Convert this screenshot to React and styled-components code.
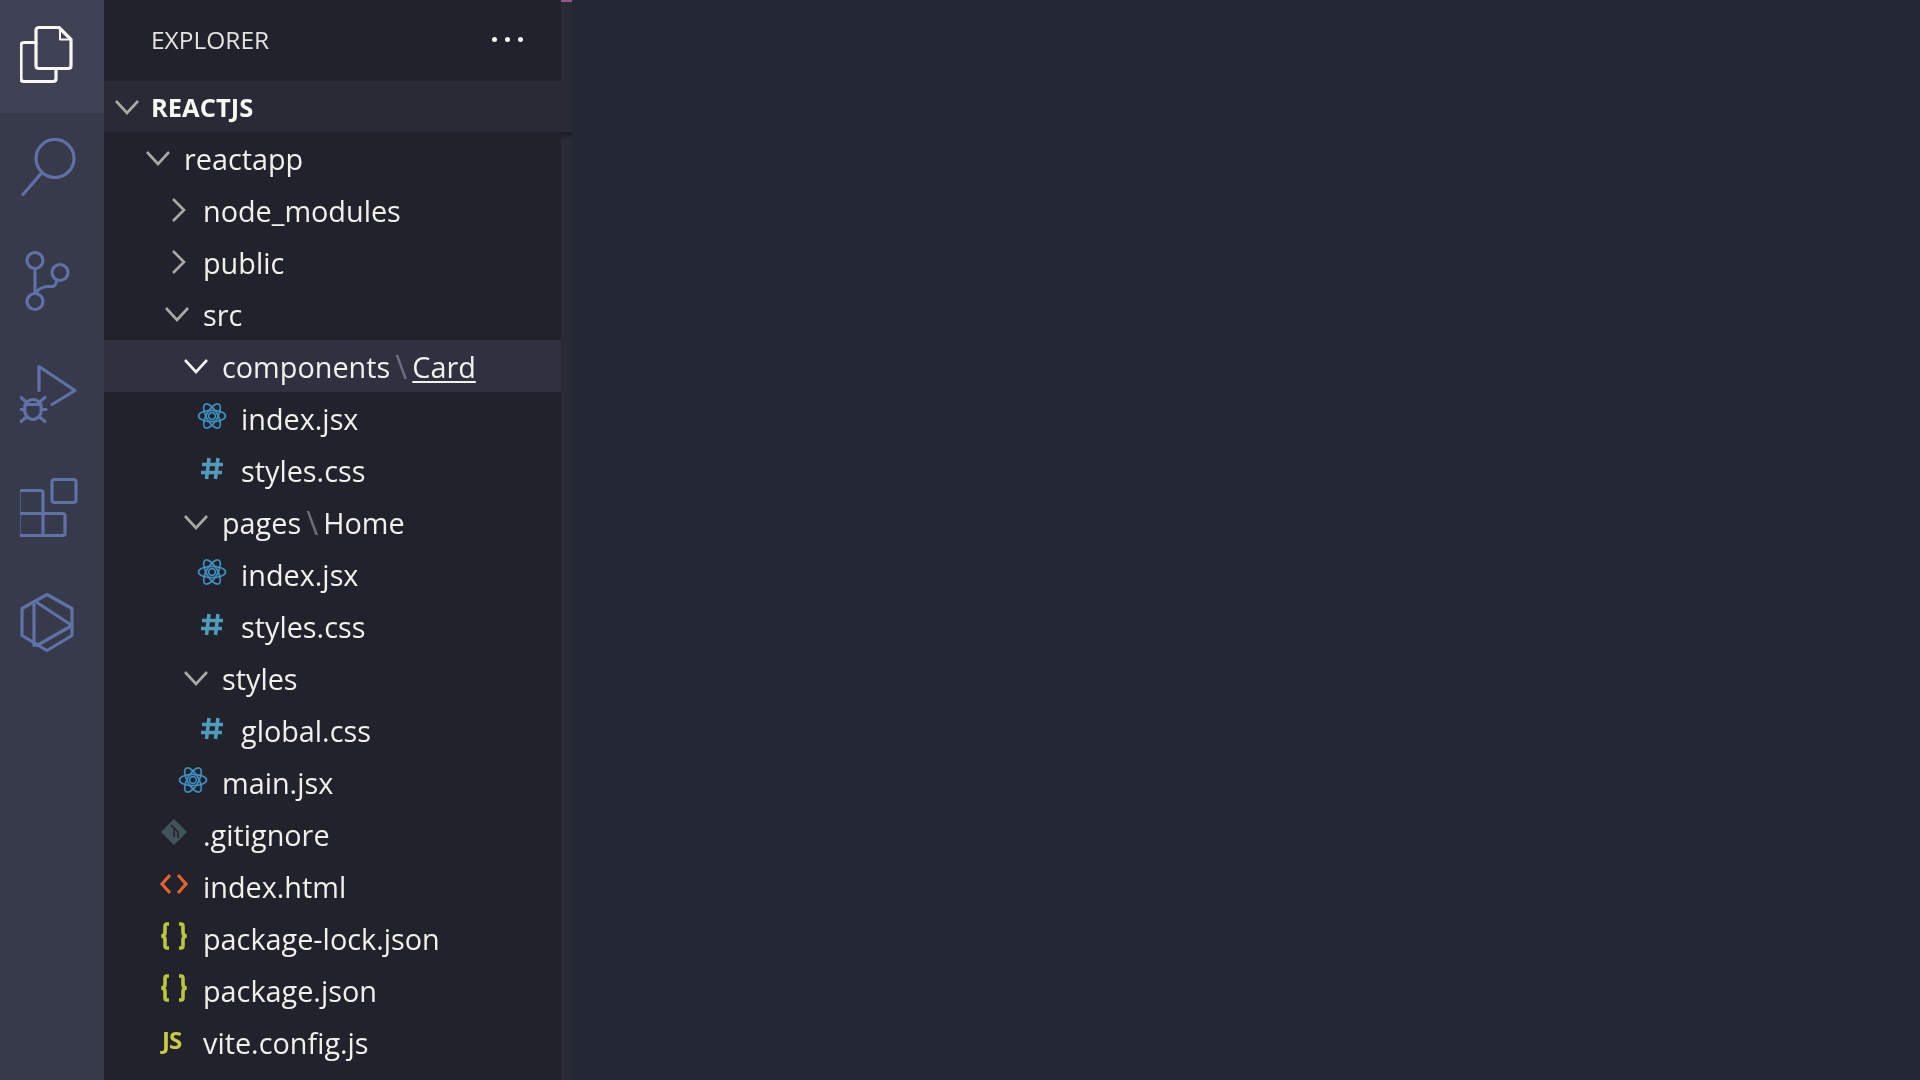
import React from 'react'
import styled, { createGlobalStyle } from 'styled-components'

const GlobalStyle = createGlobalStyle`
    html, body {
        margin: 0;
        height: 100%;
        background: #242834;
    }
    body {
        font-family: 'Open Sans', 'Noto Sans', sans-serif;
        overflow: hidden;
    }
`

const Workbench = styled.div`
    display: flex;
    width: 1920px;
    height: 1080px;
    overflow: hidden;
    background: #242834;
    filter: blur(0.4px);
`

const ActivityBar = styled.nav`
    flex: 0 0 104px;
    display: flex;
    flex-direction: column;
    background: #363a4a;
`

const ActivityItem = styled.div`
    flex: 0 0 113px;
    display: flex;
    align-items: center;
    justify-content: center;
    background: ${(p) => (p.$active ? '#3f4155' : 'transparent')};
`

const ActivityIcon = styled.svg`
    width: 64px;
    height: 64px;
    fill: none;
    stroke: ${(p) => (p.$active ? '#f8f8f2' : '#6071a8')};
    stroke-width: 3.2;
    stroke-linecap: round;
    stroke-linejoin: round;
`

const SideBar = styled.aside`
    position: relative;
    flex: 0 0 468px;
    display: flex;
    flex-direction: column;
    background: #282a36;
`

const TitleBar = styled.header`
    flex: 0 0 81px;
    display: flex;
    align-items: center;
    justify-content: space-between;
    box-sizing: border-box;
    margin-right: 11px;
    padding: 0 38px 2px 47px;
    background: #21222c;
`

const Title = styled.h2`
    margin: 0;
    font-size: 24.5px;
    font-weight: 400;
    color: #e4e4df;
`

const MoreDots = styled.div`
    display: flex;
    gap: 8px;
`

const Dot = styled.span`
    width: 5px;
    height: 5px;
    border-radius: 50%;
    background: #f8f8f2;
`

const SectionHeader = styled.div`
    flex: 0 0 51px;
    display: flex;
    align-items: center;
    padding-left: 11px;
    font-size: 25.5px;
    font-weight: 700;
    color: #f8f8f2;
`

const SectionLabel = styled.span`
    margin-left: -2px;
`

const Tree = styled.div`
    flex: 1;
    margin-right: 11px;
    background: #21222c;
`

const Row = styled.div`
    display: flex;
    align-items: center;
    height: 52px;
    padding-left: ${(p) => 23 + p.$level * 19}px;
    font-size: 28.8px;
    color: #f1f1ec;
    white-space: nowrap;
    background: ${(p) => (p.$selected ? '#2f3140' : 'transparent')};
`

const IconSlot = styled.span`
    flex: 0 0 38px;
    display: flex;
    align-items: center;
    height: 100%;
`

const Chevron = styled.svg`
    width: 24px;
    height: 24px;
    fill: none;
    stroke: ${(p) => (p.$bright ? '#f1f1ec' : '#a9a9a6')};
    stroke-width: 2.6;
`

const FileIcon = styled.svg`
    width: 30px;
    height: 30px;
    margin-left: -6px;
    margin-top: -4px;
    fill: none;
`

const JsBadge = styled.span`
    margin-left: -3px;
    margin-top: -5px;
    font-size: 24px;
    font-weight: 700;
    letter-spacing: -1px;
    color: #cbcb41;
`

const Separator = styled.span`
    margin: 0 5px;
    font-size: 33px;
    line-height: 1;
    color: #6b6d78;
`

const Underlined = styled.span`
    text-decoration: underline;
    text-underline-offset: 3px;
    text-decoration-thickness: 2px;
`

const GutterShadow = styled.div`
    position: absolute;
    top: 132px;
    right: 0;
    width: 11px;
    height: 8px;
    background: linear-gradient(#1b1c24, #282a36);
`

const ActiveMark = styled.div`
    position: absolute;
    top: 0;
    right: 0;
    width: 11px;
    height: 2px;
    background: #a0528c;
`

const ChevronIcon = ({ open, bright }) => (
    <Chevron viewBox="0 0 24 24" $bright={bright}>
        {open ? <path d="M1 6l11 12L23 6" /> : <path d="M8 1l11 11L8 23" />}
    </Chevron>
)

const ReactIcon = () => (
    <FileIcon viewBox="0 0 30 30" stroke="#3f8fbf" strokeWidth="1.7">
        <ellipse cx="15" cy="15" rx="13.5" ry="5.6" />
        <ellipse cx="15" cy="15" rx="13.5" ry="5.6" transform="rotate(60 15 15)" />
        <ellipse cx="15" cy="15" rx="13.5" ry="5.6" transform="rotate(120 15 15)" />
        <circle cx="15" cy="15" r="3.4" />
    </FileIcon>
)

const HashIcon = () => (
    <FileIcon viewBox="0 0 30 30" stroke="#519aba" strokeWidth="3.6">
        <path d="M12 5L9.500 26M21 5l-2.500 21M5 11.500h21M4 19.500h21" />
    </FileIcon>
)

const GitIcon = () => (
    <FileIcon viewBox="0 0 30 30">
        <path d="M15 2l13 13-13 13L2 15z" fill="#41535b" />
        <path d="M12 8l7 7v6M15 12v8" stroke="#21222c" strokeWidth="1.6" />
    </FileIcon>
)

const HtmlIcon = () => (
    <FileIcon viewBox="0 0 30 30" stroke="#e0622c" strokeWidth="3.2">
        <path d="M11 6l-8 9 8 9M19 6l8 9-8 9" />
    </FileIcon>
)

const JsonIcon = () => (
    <FileIcon viewBox="0 0 30 30" stroke="#bcc63c" strokeWidth="3.6">
        <path d="M10 3H8Q6 3 6 5.500v6Q6 14.500 2.500 15Q6 15.500 6 18.500v6Q6 27 8 27h2" />
        <path d="M20 3h2Q24 3 24 5.500v6q0 3 3.500 3.500Q24 15.500 24 18.500v6Q24 27 22 27h-2" />
    </FileIcon>
)

const fileIcons = {
    react: <ReactIcon />,
    css: <HashIcon />,
    git: <GitIcon />,
    html: <HtmlIcon />,
    json: <JsonIcon />,
    js: <JsBadge>JS</JsBadge>,
}

const rows = [
    { level: 1, open: true, name: 'reactapp' },
    { level: 2, open: false, name: 'node_modules' },
    { level: 2, open: false, name: 'public' },
    { level: 2, open: true, name: 'src' },
    { level: 3, open: true, name: 'components', child: 'Card', selected: true },
    { level: 4, icon: 'react', name: 'index.jsx' },
    { level: 4, icon: 'css', name: 'styles.css' },
    { level: 3, open: true, name: 'pages', child: 'Home' },
    { level: 4, icon: 'react', name: 'index.jsx' },
    { level: 4, icon: 'css', name: 'styles.css' },
    { level: 3, open: true, name: 'styles' },
    { level: 4, icon: 'css', name: 'global.css' },
    { level: 3, icon: 'react', name: 'main.jsx' },
    { level: 2, icon: 'git', name: '.gitignore' },
    { level: 2, icon: 'html', name: 'index.html' },
    { level: 2, icon: 'json', name: 'package-lock.json' },
    { level: 2, icon: 'json', name: 'package.json' },
    { level: 2, icon: 'js', name: 'vite.config.js' },
]

const App = () => {
    return (
        <>
            <GlobalStyle />
            <Workbench>
                <ActivityBar>
                    <ActivityItem $active>
                        <ActivityIcon $active viewBox="20 24.5 64 64">
                            <path d="M36 42h-12q-3 0-3 3v33q0 3 3 3h29q3 0 3-3v-10" />
                            <path d="M39 27h20l12 12v26q0 3-3 3H39q-3 0-3-3V30q0-3 3-3z" />
                            <path d="M60 29v10h10" strokeWidth="2" />
                        </ActivityIcon>
                    </ActivityItem>
                    <ActivityItem>
                        <ActivityIcon viewBox="20 137.500 64 64">
                            <circle cx="55" cy="158" r="19" />
                            <path d="M42 172L23 194" />
                        </ActivityIcon>
                    </ActivityItem>
                    <ActivityItem>
                        <ActivityIcon viewBox="20 250.500 64 64">
                            <circle cx="35" cy="260" r="8" />
                            <circle cx="60" cy="272" r="8" />
                            <circle cx="35" cy="301" r="8" />
                            <path d="M35 268v25M37 291q3-4 10-5h6q3-1 4-7" />
                        </ActivityIcon>
                    </ActivityItem>
                    <ActivityItem>
                        <ActivityIcon viewBox="20 363.500 64 64">
                            <path d="M39 390v-24l36 24-23 14" />
                            <ellipse cx="33" cy="409" rx="8.500" ry="10" />
                            <path d="M25 404h16M21 397l6 5M45 397l-6 5M20 409h5M41 409h5M21 421l6-5M45 421l-6-5" />
                        </ActivityIcon>
                    </ActivityItem>
                    <ActivityItem>
                        <ActivityIcon viewBox="20 476.500 64 64">
                            <rect x="52" y="479" width="24" height="23" rx="2.500" />
                            <path d="M21 490h20q2 0 2 2v21h20q2 0 2 2v18q0 2-2 2H21q-2 0-2-2v-41q0-2 2-2zM19 513h24v22" />
                        </ActivityIcon>
                    </ActivityItem>
                    <ActivityItem>
                        <ActivityIcon viewBox="20 589.500 64 64">
                            <path d="M47 594l25 14v27l-25 15-25-15v-27z" />
                            <path d="M37 602l35 23-35 20M34 604v41" />
                        </ActivityIcon>
                    </ActivityItem>
                </ActivityBar>
                <SideBar>
                    <TitleBar>
                        <Title>EXPLORER</Title>
                        <MoreDots>
                            <Dot />
                            <Dot />
                            <Dot />
                        </MoreDots>
                    </TitleBar>
                    <SectionHeader>
                        <IconSlot>
                            <ChevronIcon open />
                        </IconSlot>
                        <SectionLabel>REACTJS</SectionLabel>
                    </SectionHeader>
                    <Tree>
                        {rows.map((row, i) => (
                            <Row key={i} $level={row.level} $selected={row.selected}>
                                <IconSlot>
                                    {row.icon ? (
                                        fileIcons[row.icon]
                                    ) : (
                                        <ChevronIcon open={row.open} bright={row.selected} />
                                    )}
                                </IconSlot>
                                {row.name}
                                {row.child && (
                                    <>
                                        <Separator>\</Separator>
                                        {row.selected ? <Underlined>{row.child}</Underlined> : row.child}
                                    </>
                                )}
                            </Row>
                        ))}
                    </Tree>
                    <ActiveMark />
                    <GutterShadow />
                </SideBar>
            </Workbench>
        </>
    )
}

export default App
